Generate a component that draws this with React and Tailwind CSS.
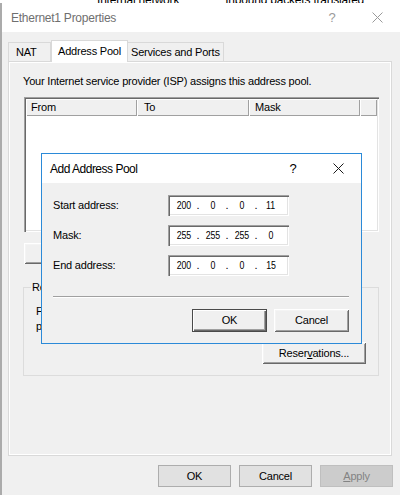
import React from "react";

function XIcon({ color }) {
  return (
    <svg width="11" height="11" viewBox="0 0 11 11">
      <path d="M0.5 0.5L10.5 10.5M10.5 0.5L0.5 10.5" stroke={color} strokeWidth="1" fill="none" />
    </svg>
  );
}

const classicRaised =
  "shadow-[inset_1px_1px_0_#ffffff,inset_-1px_-1px_0_#696969,inset_2px_2px_0_#f4f4f4,inset_-2px_-2px_0_#a0a0a0]";
const classicDefault =
  "border border-[#4a4a4a] shadow-[inset_1px_1px_0_#ffffff,inset_-1px_-1px_0_#696969,inset_-2px_-2px_0_#a0a0a0]";
const sunken =
  "shadow-[inset_1px_1px_0_#a0a0a0,inset_2px_2px_0_#696969,inset_-1px_-1px_0_#ffffff,inset_-2px_-2px_0_#e3e3e3]";

function ClassicButton({ children, className = "", isDefault = false }) {
  return (
    <div
      className={`flex items-center justify-center bg-[#f0f0f0] text-[11px] text-black ${
        isDefault ? classicDefault : classicRaised
      } ${className}`}
    >
      {children}
    </div>
  );
}

function ThemedButton({ children, disabled = false }) {
  return (
    <div
      className={
        disabled
          ? "w-[73px] h-[22px] flex items-center justify-center bg-[#cccccc] border border-[#bfbfbf] text-[#838383] text-[11px]"
          : "w-[73px] h-[22px] flex items-center justify-center bg-[#e1e1e1] border border-[#adadad] text-black text-[11px]"
      }
    >
      {children}
    </div>
  );
}

function IpInput({ parts }) {
  return (
    <div className={`w-[121px] h-[21px] bg-white flex items-center pl-[4px] text-[11px] leading-[15px] ${sunken}`}>
      {parts.map((p, i) => (
        <React.Fragment key={i}>
          <span className="w-[23px] text-center">
            <span className="inline-block scale-x-80">{p}</span>
          </span>
          {i < 3 && <span className="w-[6px] text-center">.</span>}
        </React.Fragment>
      ))}
    </div>
  );
}

function HeaderCell({ children, className }) {
  return (
    <div
      className={`h-full flex items-center bg-[#f0f0f0] text-[11px] shadow-[inset_1px_1px_0_#ffffff,inset_-1px_-1px_0_#a0a0a0] ${className}`}
    >
      {children}
    </div>
  );
}

export default function App() {
  return (
    <div className="w-[400px] h-[495px] overflow-hidden bg-white flex flex-col font-['Liberation_Sans',Arial,sans-serif] tracking-[-0.2px] text-black relative">
      {/* strip of the window behind */}
      <div className="h-[3px] overflow-hidden flex items-end bg-white shrink-0">
        <span className="ml-[97px] text-[12px] leading-[12px] -mb-[3px] whitespace-nowrap">Internal network</span>
        <span className="ml-[46px] text-[12px] leading-[12px] -mb-[3px] whitespace-nowrap">Inbound packets translated</span>
      </div>

      {/* main window */}
      <div className="flex-1 flex flex-col border-l-2 border-[#ababab]">
        {/* title bar */}
        <div className="h-[29px] bg-white flex items-center shrink-0">
          <span className="pl-[9px] text-[12px] tracking-[-0.25px] text-[#6f6f6f]">Ethernet1 Properties</span>
          <div className="ml-auto flex items-center">
            <span className="w-[20px] text-center text-[13px] text-[#9a9a9a]">?</span>
            <span className="w-[25px]" />
            <span className="w-[20px] flex justify-center">
              <XIcon color="#9a9a9a" />
            </span>
            <span className="w-[13px]" />
          </div>
        </div>

        {/* body */}
        <div className="flex-1 bg-[#f0f0f0] flex flex-col pt-[8px]">
          {/* tabs */}
          <div className="flex items-end h-[21px] pl-[6px] text-[11px]">
            <div className="w-[43px] h-[19px] flex items-center pl-[7px] border border-b-0 border-[#d9d9d9] bg-[#f0f0f0]">NAT</div>
            <div className="w-[77px] h-[22px] -mb-px relative z-10 flex items-center pl-[6px] border border-b-0 border-[#d9d9d9] bg-white">
              Address Pool
            </div>
            <div className="w-[96px] h-[19px] flex items-center pl-[3px] border border-l-0 border-b-0 border-[#d9d9d9] bg-[#f0f0f0]">
              Services and Ports
            </div>
          </div>

          {/* tab panel */}
          <div className="ml-[6px] w-[384px] h-[395px] border border-[#d9d9d9] bg-[#f0f0f0] shadow-[inset_1px_1px_0_#ffffff,inset_-1px_-1px_0_#ffffff] flex flex-col pl-[15px] pt-[12px] text-[11px]">
            <div className="-ml-px leading-[15px]">Your Internet service provider (ISP) assigns this address pool.</div>

            {/* list view */}
            <div className={`mt-[8px] w-[355px] h-[135px] bg-white flex flex-col p-[2px] ${sunken}`}>
              <div className="flex h-[17px]">
                <HeaderCell className="w-[111px] pl-[5px]">From</HeaderCell>
                <HeaderCell className="w-[112px] pl-[7px]">To</HeaderCell>
                <HeaderCell className="w-[111px] pl-[6px]">Mask</HeaderCell>
                <HeaderCell className="flex-1" />
              </div>
            </div>

            {/* buttons hidden behind dialog */}
            <div className="mt-[11px] flex gap-[6px]">
              <ClassicButton className="w-[75px] h-[21px]">Add...</ClassicButton>
              <ClassicButton className="w-[75px] h-[21px]">Edit...</ClassicButton>
            </div>

            {/* group box */}
            <fieldset className="mt-[16px] -ml-px w-[356px] border border-[#dcdcdc] pb-[11px]">
              <legend className="ml-[7px] px-[1px] leading-[15px]">Reservations</legend>
              <div className="pl-[12px] pt-[9px] leading-[15px]">
                <div>For some computers,</div>
                <div>public addresses.</div>
              </div>
              <div className="mt-[8px] flex justify-end pr-[12px]">
                <ClassicButton className="w-[104px] h-[22px]">
                  <span>
                    Reser<span className="underline">v</span>ations...
                  </span>
                </ClassicButton>
              </div>
            </fieldset>
          </div>

          {/* bottom buttons */}
          <div className="mt-[9px] flex justify-end gap-[8px] pr-[7px]">
            <ThemedButton>OK</ThemedButton>
            <ThemedButton>Cancel</ThemedButton>
            <ThemedButton disabled>
              <span>
                <span className="underline">A</span>pply
              </span>
            </ThemedButton>
          </div>
        </div>
      </div>

      {/* Add Address Pool dialog */}
      <div className="absolute left-[41px] top-[153px] w-[321px] h-[191px] border border-[#2b8ad8] bg-[#f0f0f0] flex flex-col">
        <div className="h-[29px] bg-white flex items-center shrink-0">
          <span className="pl-[8px] text-[12px] tracking-[-0.5px]">Add Address Pool</span>
          <div className="ml-auto flex items-center">
            <span className="w-[20px] text-center text-[13px]">?</span>
            <span className="w-[25px]" />
            <span className="w-[20px] flex justify-center">
              <XIcon color="#1a1a1a" />
            </span>
            <span className="w-[13px]" />
          </div>
        </div>
        <div className="flex flex-col pt-[12px] pl-[11px] pr-[11px] text-[11px]">
          <div className="flex flex-col gap-[9px]">
            <div className="flex items-center">
              <span className="w-[115px]">Start address:</span>
              <IpInput parts={["200", "0", "0", "11"]} />
            </div>
            <div className="flex items-center">
              <span className="w-[115px]">Mask:</span>
              <IpInput parts={["255", "255", "255", "0"]} />
            </div>
            <div className="flex items-center">
              <span className="w-[115px]">End address:</span>
              <IpInput parts={["200", "0", "0", "15"]} />
            </div>
          </div>
          <div className="mt-[20px] w-[296px] border-t border-[#a0a0a0] border-b border-b-white" />
          <div className="mt-[11px] flex justify-end gap-[7px] w-[296px]">
            <ClassicButton isDefault className="w-[75px] h-[23px]">OK</ClassicButton>
            <ClassicButton className="w-[75px] h-[23px]">Cancel</ClassicButton>
          </div>
        </div>
      </div>
    </div>
  );
}
